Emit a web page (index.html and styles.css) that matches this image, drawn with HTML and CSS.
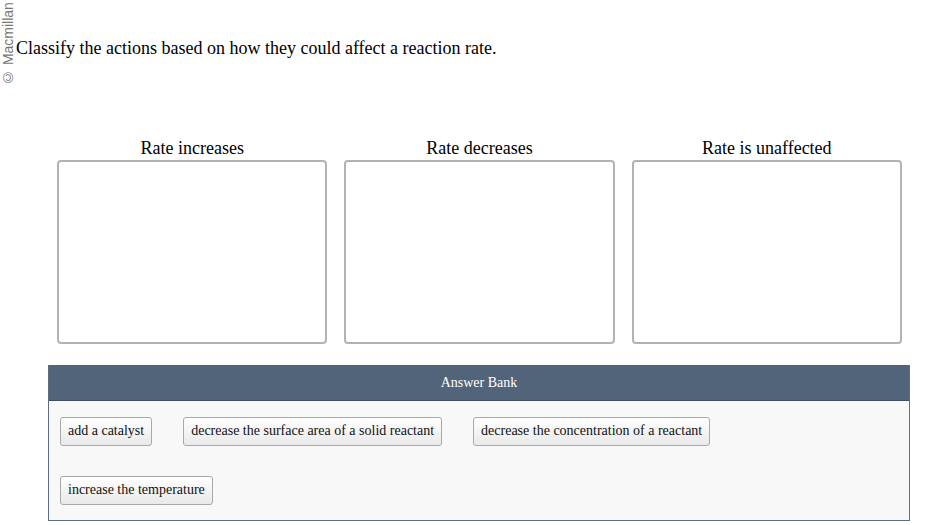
FILE: index.html
```html
<!DOCTYPE html>
<html>
<head>
<meta charset="utf-8">
<link rel="stylesheet" href="styles.css">
</head>
<body>
<div class="top">
  <div class="copy">© Macmillan</div>
  <div class="title">Classify the actions based on how they could affect a reaction rate.</div>
</div>
<div class="columns">
  <div class="col">
    <div class="head">Rate increases</div>
    <div class="box"></div>
  </div>
  <div class="col">
    <div class="head">Rate decreases</div>
    <div class="box"></div>
  </div>
  <div class="col">
    <div class="head">Rate is unaffected</div>
    <div class="box"></div>
  </div>
</div>
<div class="bank">
  <div class="bank-head">Answer Bank</div>
  <div class="bank-body">
    <div class="chip">add a catalyst</div>
    <div class="chip">decrease the surface area of a solid reactant</div>
    <div class="chip">decrease the concentration of a reactant</div>
    <div class="chip">increase the temperature</div>
  </div>
</div>
</body>
</html>
```
FILE: styles.css
```css
html, body {
  margin: 0;
  padding: 0;
  background: #ffffff;
}
body {
  font-family: "Liberation Serif", "Times New Roman", serif;
  color: #000;
  width: 930px;
  height: 525px;
  overflow: hidden;
}
.top {
  display: flex;
  align-items: center;
  height: 88px;
}
.copy {
  writing-mode: vertical-rl;
  transform: rotate(180deg);
  font-family: "Liberation Sans", Arial, sans-serif;
  font-size: 14px;
  color: #777;
  width: 14px;
  line-height: 14px;
  text-align: center;
  margin-left: 1px;
  height: 88px;
}
.title {
  font-size: 18px;
  margin-left: 1px;
  margin-top: 9px;
}
.columns {
  display: flex;
  gap: 17px;
  margin: 49px 0 0 57px;
  width: 845px;
}
.col {
  flex: 1;
  display: flex;
  flex-direction: column;
}
.head {
  font-size: 18px;
  line-height: 23px;
  text-align: center;
  height: 23px;
}
.box {
  height: 180px;
  border: 2px solid #b3b3b3;
  border-radius: 4px;
  background: #fff;
}
.bank {
  margin: 21px 0 0 48px;
  width: 862px;
  border: 1px solid #5d6d82;
  border-top: none;
  box-sizing: border-box;
}
.bank-head {
  background: #526479;
  color: #fff;
  font-size: 14px;
  text-align: center;
  height: 35px;
  line-height: 35px;
  border-bottom: 1px solid #3f4f63;
}
.bank-body {
  background: #f8f8f8;
  display: flex;
  flex-wrap: wrap;
  column-gap: 31px;
  row-gap: 30px;
  padding: 16px 120px 15px 11px;
}
.chip {
  font-size: 14px;
  height: 27px;
  line-height: 25px;
  padding: 0 7px;
  border: 1px solid #a9a9a9;
  border-radius: 3px;
  background: linear-gradient(#ffffff, #e9e9e9);
  color: #111;
}
```
